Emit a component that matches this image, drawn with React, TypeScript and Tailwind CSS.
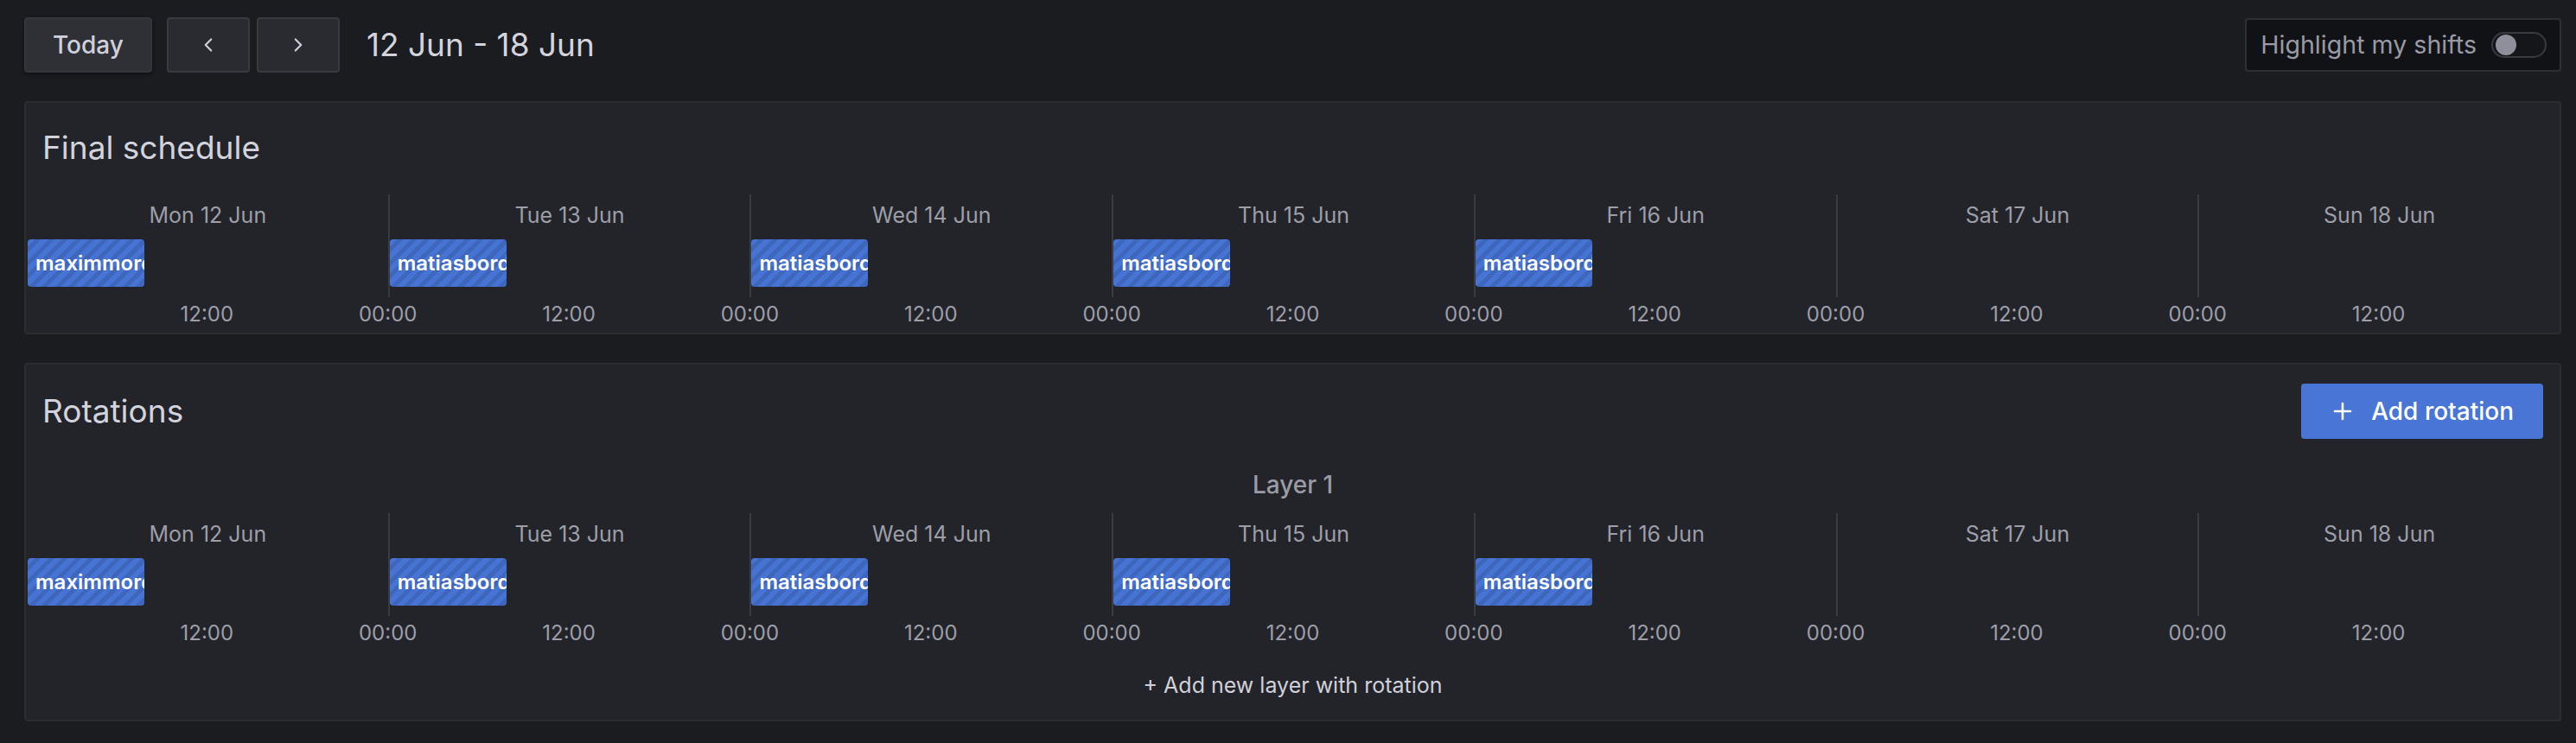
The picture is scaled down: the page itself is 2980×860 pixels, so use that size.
import { ChevronLeft, ChevronRight } from 'lucide-react';

// One week of the on-call schedule, Mon 12 Jun .. Sun 18 Jun
const days = ['Mon 12 Jun', 'Tue 13 Jun', 'Wed 14 Jun', 'Thu 15 Jun', 'Fri 16 Jun', 'Sat 17 Jun', 'Sun 18 Jun'];
const shifts: (string | null)[] = ['maximmordasov', 'matiasbordese', 'matiasbordese', 'matiasbordese', 'matiasbordese', null, null];
const ticks = Array.from({ length: 13 }, (_, i) => (i % 2 === 0 ? '12:00' : '00:00'));

function Week() {
  return (
    <div>
      <div className="grid grid-cols-7">
        {days.map((day, i) => (
          <div
            key={day}
            className={`h-[119px] border-l-2 ${i === 0 ? 'border-transparent' : 'border-[#3a3b41]'}`}
          >
            <div className="pt-[9px] text-center text-[25px] leading-[30px] text-[#9d9ea8]">{day}</div>
            {shifts[i] && (
              <div className="mt-[13px] flex h-[55px] w-[135px] items-center overflow-hidden whitespace-nowrap rounded-[4px] bg-[repeating-linear-gradient(135deg,#4774d4_0px,#4774d4_6px,#3e66bb_6px,#3e66bb_11px)] pl-[9px] text-[24px] font-semibold text-white">
                {shifts[i]}
              </div>
            )}
          </div>
        ))}
      </div>
      <div className="mt-[5px] grid grid-cols-[1fr_repeat(13,2fr)_1fr]">
        <div />
        {ticks.map((t, i) => (
          <div key={i} className="text-center text-[24px] leading-[30px] text-[#9d9ea8]">
            {t}
          </div>
        ))}
        <div />
      </div>
    </div>
  );
}

export default function App() {
  return (
    <div className="min-h-screen bg-[#1b1c20] pl-[28px] pr-[17px] pt-[20px] pb-[25px] font-['Inter',sans-serif] text-[#d0d1dc]">
      {/* Toolbar */}
      <div className="flex h-[64px] items-center">
        <button className="h-[64px] rounded-[4px] border-2 border-[#35363c] bg-[#2f3036] px-[31px] text-[28px] font-medium text-[#d0d0dc] shadow-[0_2px_4px_rgba(0,0,0,0.45)]">
          Today
        </button>
        <button className="ml-[17px] flex h-[64px] w-[96px] items-center justify-center rounded-[4px] border-2 border-[#393a40] bg-[#2a2b30] text-[#d0d0dc]">
          <ChevronLeft size={26} strokeWidth={2} />
        </button>
        <button className="ml-[8px] flex h-[64px] w-[96px] items-center justify-center rounded-[4px] border-2 border-[#393a40] bg-[#2a2b30] text-[#d0d0dc]">
          <ChevronRight size={26} strokeWidth={2} />
        </button>
        <span className="ml-[31px] text-[37px] text-[#d3d3dd]">12 Jun - 18 Jun</span>
        <div className="ml-auto flex h-[62px] items-center rounded-[4px] border-2 border-[#2f3036] bg-[#111216] pl-[16px] pr-[15px]">
          <span className="text-[28.6px] text-[#9a9aa5]">Highlight my shifts</span>
          <div className="ml-[17px] flex h-[30px] w-[64px] items-center rounded-full border-2 border-[#3a3b41] bg-[#15161a] pl-[3px]">
            <div className="h-[24px] w-[24px] rounded-full bg-[#8f8f9b]" />
          </div>
        </div>
      </div>

      {/* Final schedule */}
      <div className="mt-[33px] rounded-[4px] border-2 border-[#2c2d33] bg-[#232429] pb-[6px]">
        <div className="px-[19px] pt-[30px] text-[37px] leading-[44px] text-[#d3d3de]">Final schedule</div>
        <div className="mt-[32px]">
          <Week />
        </div>
      </div>

      {/* Rotations */}
      <div className="mt-[33px] rounded-[4px] border-2 border-[#2c2d33] bg-[#232429] pb-[25px]">
        <div className="flex items-center justify-between px-[19px] pt-[22px]">
          <span className="text-[37px] leading-[44px] text-[#d3d3de]">Rotations</span>
          <button className="flex h-[64px] items-center rounded-[4px] bg-[#4875d6] pl-[37px] pr-[34px] text-[28px] font-medium text-white">
            <svg width="22" height="22" viewBox="0 0 22 22" fill="none" stroke="currentColor" strokeWidth="2.6" strokeLinecap="round">
              <line x1="11" y1="2" x2="11" y2="20" />
              <line x1="2" y1="11" x2="20" y2="11" />
            </svg>
            <span className="ml-[22px]">Add rotation</span>
          </button>
        </div>
        <div className="mt-[36px] text-center text-[28px] font-medium leading-[34px] text-[#9b9ba5]">Layer 1</div>
        <div className="mt-[16px]">
          <Week />
        </div>
        <div className="mt-[30px] text-center text-[25px] leading-[30px] text-[#d0d0da]">+ Add new layer with rotation</div>
      </div>
    </div>
  );
}
